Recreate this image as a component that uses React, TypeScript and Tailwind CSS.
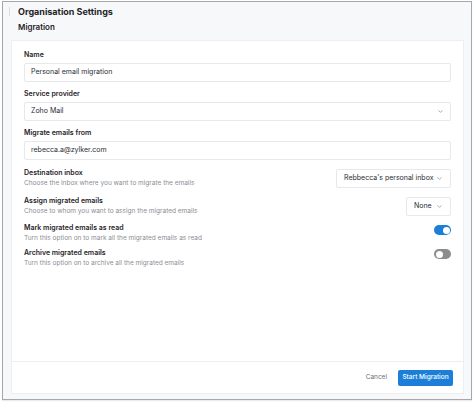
import React from 'react'
import { ChevronDown } from 'lucide-react'

const Chevron = () => <ChevronDown className="w-[7px] h-[7px] text-[#8a8d93]" strokeWidth={2.5} />

const Toggle = ({ on }: { on: boolean }) => (
  <div
    className={`w-[17px] h-[10px] rounded-full flex items-center px-[1.5px] ${
      on ? 'bg-[#1b7fd9] justify-end' : 'bg-[#8c8c8c] justify-start'
    }`}
  >
    <div className="w-[7px] h-[7px] rounded-full bg-white" />
  </div>
)

const Label = ({ children }: { children: React.ReactNode }) => (
  <div className="text-[7px] leading-[10px] font-semibold text-[#1f2328]">{children}</div>
)

const Hint = ({ children }: { children: React.ReactNode }) => (
  <div className="text-[6.5px] leading-[10px] text-[#8b8e94]">{children}</div>
)

export default function App() {
  return (
    <div className="w-[474px] h-[403px] bg-white pt-[1px] pl-[2px] font-['Inter',sans-serif]">
      <div className="w-[470px] h-[399px] border border-[#a5a7ab] bg-[#f7f8fa] flex flex-col shadow-[0_1px_1px_rgba(0,0,0,0.08)]">
        {/* Header */}
        <div className="h-[38px] pl-[15px] relative">
          <div className="absolute left-[6px] top-[5px] w-px h-[9px] bg-[#dcdde0]" />
          <div className="text-[9px] leading-[13px] font-bold text-[#1f2328] pt-[3px]">Organisation Settings</div>
          <div className="text-[8px] leading-[10px] font-semibold text-[#1f2328] mt-[4px]">Migration</div>
        </div>

        {/* Card */}
        <div className="flex-1 ml-[8px] mr-[7px] mb-[5px] bg-white border border-[#eceef1] flex flex-col">
          <div className="flex-1 px-[12px] pt-[9px]">
            <Label>Name</Label>
            <div className="mt-[3px] h-[19px] border border-[#e6e8eb] rounded-[2px] flex items-center px-[6px] text-[7px] text-[#2a2d33]">
              Personal email migration
            </div>

            <div className="mt-[7px]">
              <Label>Service provider</Label>
            </div>
            <div className="mt-[3px] h-[19px] border border-[#e6e8eb] rounded-[2px] flex items-center justify-between px-[6px] text-[7px] text-[#2a2d33]">
              <span>Zoho Mail</span>
              <Chevron />
            </div>

            <div className="mt-[7px]">
              <Label>Migrate emails from</Label>
            </div>
            <div className="mt-[3px] h-[19px] border border-[#e6e8eb] rounded-[2px] flex items-center px-[6px] text-[7px] text-[#2a2d33]">
              rebecca.a@zylker.com
            </div>

            <div className="mt-[8px] flex items-center justify-between">
              <div>
                <Label>Destination inbox</Label>
                <Hint>Choose the inbox where you want to migrate the emails</Hint>
              </div>
              <div className="h-[19px] w-[115px] border border-[#e6e8eb] rounded-[2px] flex items-center justify-between pl-[7px] pr-[7px] text-[7px] text-[#2a2d33]">
                <span>Rebbecca's personal inbox</span>
                <Chevron />
              </div>
            </div>

            <div className="mt-[8px] flex items-center justify-between">
              <div>
                <Label>Assign migrated emails</Label>
                <Hint>Choose to whom you want to assign the migrated emails</Hint>
              </div>
              <div className="h-[19px] w-[45px] border border-[#e6e8eb] rounded-[2px] flex items-center justify-between pl-[7px] pr-[7px] text-[7px] text-[#2a2d33]">
                <span>None</span>
                <Chevron />
              </div>
            </div>

            <div className="mt-[7px] flex items-start justify-between">
              <div>
                <Label>Mark migrated emails as read</Label>
                <Hint>Turn this option on to mark all the migrated emails as read</Hint>
              </div>
              <div className="mt-[2px]">
                <Toggle on />
              </div>
            </div>

            <div className="mt-[5px] flex items-start justify-between">
              <div>
                <Label>Archive migrated emails</Label>
                <Hint>Turn this option on to archive all the migrated emails</Hint>
              </div>
              <div className="mt-[1px]">
                <Toggle on={false} />
              </div>
            </div>
          </div>

          {/* Footer */}
          <div className="h-[32px] border-t border-[#eceef1] flex items-center justify-end pr-[10px] gap-[11px]">
            <button className="text-[6.5px] text-[#6b6e74]">Cancel</button>
            <button className="h-[16px] w-[55px] rounded-[2px] bg-[#1b7fd9] text-white text-[6.5px] font-medium">
              Start Migration
            </button>
          </div>
        </div>
      </div>
    </div>
  )
}
